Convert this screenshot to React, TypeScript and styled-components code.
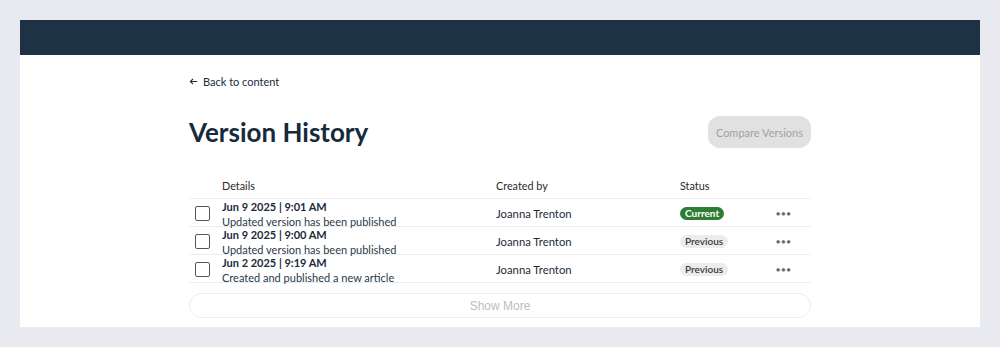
import React from "react";
import styled, { createGlobalStyle } from "styled-components";

const GlobalStyle = createGlobalStyle`
  html, body {
    margin: 0;
    padding: 0;
    background: #e9eaef;
  }
  body {
    font-family: Lato, "Noto Sans", sans-serif;
    color: #1c2b3a;
  }
  * {
    box-sizing: border-box;
  }
`;

const Page = styled.div`
  padding: 20px;
`;

const Panel = styled.div`
  background: #ffffff;
  padding-bottom: 9px;
`;

const TopBar = styled.div`
  height: 35px;
  background: #1e3245;
`;

const Content = styled.div`
  width: 622px;
  margin: 0 auto;
  padding-top: 18px;
`;

const BackLink = styled.a`
  display: flex;
  align-items: center;
  gap: 5px;
  width: max-content;
  height: 16px;
  font-size: 11px;
  color: #1c2b3a;
  text-decoration: none;
  cursor: pointer;

  svg {
    width: 9px;
    height: 9px;
  }
`;

const TitleRow = styled.div`
  display: flex;
  align-items: center;
  justify-content: space-between;
  margin-top: 27px;
  height: 32px;
`;

const Title = styled.h1`
  margin: 0;
  font-size: 26px;
  font-weight: 700;
  color: #172a3c;
`;

const CompareButton = styled.button`
  height: 32px;
  padding: 0 8px;
  border: none;
  border-radius: 12px;
  background: #e1e1e1;
  color: #a2a2a2;
  font-family: Lato, "Noto Sans", sans-serif;
  font-size: 11px;
  cursor: default;
`;

const Table = styled.div`
  margin-top: 25px;
`;

const Row = styled.div<{ $header?: boolean }>`
  display: grid;
  grid-template-columns: 33px 274px 184px 96px 1fr;
  align-items: center;
  height: ${({ $header }) => ($header ? "26px" : "28px")};
  border-bottom: 1px solid #ececec;
  font-size: ${({ $header }) => ($header ? "10.8px" : "11.3px")};
  color: ${({ $header }) => ($header ? "#2b2b2b" : "#1c2b3a")};
`;

const CheckCell = styled.div`
  display: flex;
  align-items: center;
  padding-left: 6px;
`;

const Checkbox = styled.span`
  display: block;
  width: 15px;
  height: 15px;
  border: 1.5px solid #555;
  border-radius: 2px;
`;

const Details = styled.div`
  align-self: start;
  display: flex;
  flex-direction: column;
  gap: 1px;
  padding-top: 1px;
  line-height: 14px;
  height: 28px;
`;

const DateLine = styled.span`
  font-weight: 700;
  font-size: 11px;
`;

const Desc = styled.span`
  font-size: 11px;
  color: #2a3a4a;
`;

const Pill = styled.span<{ $current?: boolean }>`
  justify-self: start;
  padding: 0 5px;
  height: 13px;
  line-height: 13px;
  border-radius: 7px;
  font-size: 10px;
  font-weight: ${({ $current }) => ($current ? 700 : 600)};
  background: ${({ $current }) => ($current ? "#2d7d32" : "#ececec")};
  color: ${({ $current }) => ($current ? "#ffffff" : "#3a3a3a")};
`;

const Dots = styled.span`
  font-size: 7px;
  letter-spacing: 1px;
  color: #6a6a6a;
  line-height: 1;
`;

const ShowMore = styled.button`
  display: block;
  width: 100%;
  height: 25px;
  margin-top: 10px;
  border: 1px solid #ededed;
  border-radius: 13px;
  background: #fff;
  color: #bdbdbd;
  font-family: "Liberation Sans", Arial, sans-serif;
  font-size: 12px;
`;

const versions = [
  { date: "Jun 9 2025 | 9:01 AM", desc: "Updated version has been published", current: true },
  { date: "Jun 9 2025 | 9:00 AM", desc: "Updated version has been published", current: false },
  { date: "Jun 2 2025 | 9:19 AM", desc: "Created and published a new article", current: false },
];

export default function App() {
  return (
    <>
      <GlobalStyle />
      <Page>
        <Panel>
          <TopBar />
          <Content>
            <BackLink>
              <svg viewBox="0 0 10 10" fill="none" stroke="#1c2b3a" strokeWidth="1.2">
                <path d="M9 5H1.5M4.5 2L1.5 5l3 3" />
              </svg>
              Back to content
            </BackLink>
            <TitleRow>
              <Title>Version History</Title>
              <CompareButton disabled>Compare Versions</CompareButton>
            </TitleRow>
            <Table>
              <Row $header>
                <span />
                <span>Details</span>
                <span>Created by</span>
                <span>Status</span>
                <span />
              </Row>
              {versions.map((v) => (
                <Row key={v.date}>
                  <CheckCell>
                    <Checkbox />
                  </CheckCell>
                  <Details>
                    <DateLine>{v.date}</DateLine>
                    <Desc>{v.desc}</Desc>
                  </Details>
                  <span>Joanna Trenton</span>
                  <Pill $current={v.current}>{v.current ? "Current" : "Previous"}</Pill>
                  <Dots>●●●</Dots>
                </Row>
              ))}
            </Table>
            <ShowMore>Show More</ShowMore>
          </Content>
        </Panel>
      </Page>
    </>
  );
}
